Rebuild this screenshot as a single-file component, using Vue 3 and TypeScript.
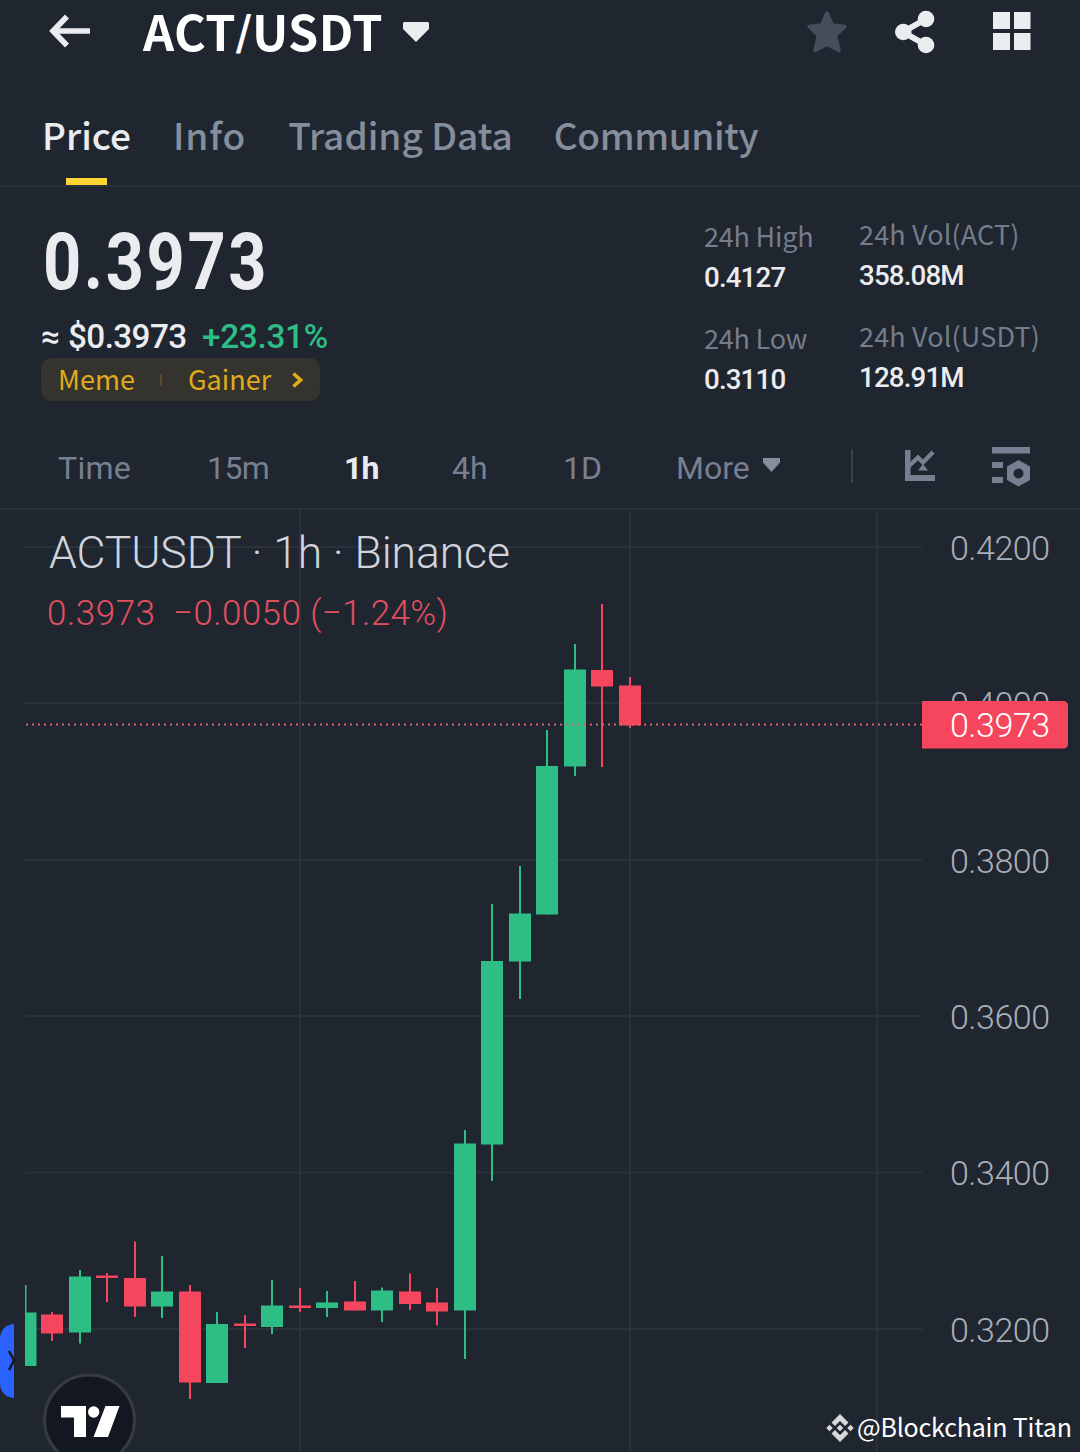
<script setup lang="ts">
interface Candle {
  x: number
  high: number
  top: number
  bottom: number
  low: number
  up: boolean
}

interface Stat {
  label: string
  value: string
}

const tabs: string[] = ['Price', 'Info', 'Trading Data', 'Community']

const statColumns: Stat[][] = [
  [
    { label: '24h High', value: '0.4127' },
    { label: '24h Low', value: '0.3110' },
  ],
  [
    { label: '24h Vol(ACT)', value: '358.08M' },
    { label: '24h Vol(USDT)', value: '128.91M' },
  ],
]

const intervals: string[] = ['Time', '15m', '1h', '4h', '1D', 'More']

const gridX: number[] = [300, 630, 877]
const ticks = [
  { y: 547, label: '0.4200' },
  { y: 703, label: '0.4000' },
  { y: 860, label: '0.3800' },
  { y: 1016, label: '0.3600' },
  { y: 1172.5, label: '0.3400' },
  { y: 1329, label: '0.3200' },
]

// x, wick top, body top, body bottom, wick bottom, rising
const rows: [number, number, number, number, number, boolean][] = [
  [25.5, 1285, 1312.5, 1366, 1366, true],
  [52, 1312, 1314.5, 1333.5, 1341, false],
  [80, 1270, 1276.5, 1332.5, 1343.5, true],
  [107, 1273, 1275.5, 1278, 1302, false],
  [135, 1241.5, 1278, 1306.5, 1317, false],
  [162, 1256, 1291.5, 1306.5, 1318, true],
  [190, 1285, 1291.5, 1382.5, 1399, false],
  [217, 1312, 1324, 1383, 1383, true],
  [245, 1315, 1323.5, 1326, 1348, false],
  [272, 1280, 1305.5, 1327, 1334, true],
  [300, 1288, 1305.5, 1308, 1312, false],
  [327, 1291, 1302.5, 1308, 1317, true],
  [355, 1281, 1301.5, 1310.5, 1310.5, false],
  [382, 1287.5, 1290.5, 1310.5, 1322, true],
  [410, 1273.5, 1291.5, 1304, 1310, false],
  [437, 1288, 1302.5, 1311.5, 1325.5, false],
  [465, 1130, 1143.5, 1310.5, 1359, true],
  [492, 904, 961, 1144.5, 1181, true],
  [520, 866, 913.5, 961.5, 999, true],
  [547, 730, 766, 914.5, 914.5, true],
  [575, 644, 669.5, 766.5, 776, true],
  [602, 604, 670, 686.5, 767, false],
  [630, 677, 685.5, 725.5, 728, false],
]
const candles: Candle[] = rows.map(([x, high, top, bottom, low, up]) => ({ x, high, top, bottom, low, up }))
</script>

<template>
  <main class="screen">
    <header class="topbar">
      <svg class="back" width="42" height="34" viewBox="0 0 42 34" fill="none" stroke="#eaecef" stroke-width="5.6">
        <path d="M41 17H5M18 2.500 4 17l14 14.500" />
      </svg>
      <h1>ACT<span class="slash">/</span>USDT</h1>
      <svg class="caret" width="26" height="20" viewBox="0 0 26 20"><path d="M1 0H25L26 1V7L13 20 0 7V1Z" fill="#eaecef" /></svg>
      <div class="actions">
        <svg width="42" height="44" viewBox="0 0 42 44">
          <path d="M21 3 26.200 15 39 16.500 29.500 25.500 33 40.500 21 34.500 9 40.500 12.500 25.500 3 16.500 15.800 15Z" fill="#474d5b" stroke="#474d5b" stroke-width="3.500" stroke-linejoin="round" />
        </svg>
        <svg width="40" height="44" viewBox="0 0 40 44" fill="#eaecef">
          <path d="M31 9 8 22 31 35" fill="none" stroke="#eaecef" stroke-width="6" />
          <circle cx="31" cy="9" r="8.300" /><circle cx="8.300" cy="22" r="8.300" /><circle cx="31" cy="35" r="8.300" />
        </svg>
        <svg width="38" height="38" viewBox="0 0 38 38" fill="#eaecef">
          <path d="M0 0H17V17H0ZM21 0H37.500V17H21ZM0 21H17V38H0ZM21 21H37.500V38H21Z" />
        </svg>
      </div>
    </header>

    <nav class="tabs">
      <a v-for="(tab, i) in tabs" :key="tab" :class="['tab', 'tab-' + i, { active: i === 0 }]">{{ tab }}</a>
    </nav>

    <section class="summary">
      <div class="quote">
        <div class="price">0.3973</div>
        <div class="fiat"><span class="approx">≈</span><span class="usd">$0.3973</span><span class="change">+23.31%</span></div>
        <div class="tags">
          <span class="meme">Meme</span><i></i><span class="gainer">Gainer</span>
          <svg width="11" height="16" viewBox="0 0 11 16" fill="none" stroke="#e0ab1c" stroke-width="3.600"><path d="M1.500 1.500 8.500 8l-7 6.500" /></svg>
        </div>
      </div>
      <div v-for="(column, i) in statColumns" :key="i" :class="['stats', 'stats-' + i]">
        <div v-for="s in column" :key="s.label" class="stat">
          <div class="label">{{ s.label }}</div>
          <div class="value">{{ s.value }}</div>
        </div>
      </div>
    </section>

    <div class="toolbar">
      <span v-for="(t, i) in intervals" :key="t" :class="['interval', 'interval-' + i, { selected: t === '1h' }]">{{ t }}</span>
      <svg class="more" width="17" height="14" viewBox="0 0 17 14"><path d="M0 0H17V4.500L8.500 14 0 4.500Z" fill="#848e9c" /></svg>
      <i class="divider"></i>
      <svg class="indicator" width="32" height="32" viewBox="0 0 32 32" fill="#787f90">
        <path d="M0 1H5.500V26H30V32H0Z" />
        <path d="M4 17 13 8.500 18 13.500 28 3" fill="none" stroke="#787f90" stroke-width="4.200" />
        <path d="M18 15 23 21.500H13Z" />
      </svg>
      <svg class="settings" width="38" height="40" viewBox="0 0 38 40" fill="#787f90">
        <path d="M0 0H38V6.500H0ZM0 15H11V21H0ZM0 30H11V36H0Z" />
        <path fill-rule="evenodd" d="M26.500 13 38 19.500V33L26.500 39.500 15 33V19.500ZM26.500 21.500a5 5 0 1 0 0 10 5 5 0 0 0 0-10Z" />
      </svg>
    </div>

    <svg class="chart" width="1080" height="944" viewBox="0 508 1080 944">
      <g stroke="#2a313b" stroke-width="2">
        <path d="M0 509H1080" />
        <path v-for="x in gridX" :key="x" :d="`M${x} 508V1452`" />
        <path v-for="t in ticks" :key="t.y" :d="`M25 ${t.y}H922`" />
      </g>
      <g class="axis">
        <text v-for="t in ticks" :key="t.y" x="950" :y="t.y + 12.500" textLength="100">{{ t.label }}</text>
      </g>
      <clipPath id="plot"><rect x="25" y="508" width="897" height="944" /></clipPath>
      <g clip-path="url(#plot)">
        <g v-for="c in candles" :key="c.x" :class="c.up ? 'up' : 'down'">
          <rect :x="c.x - 1" :y="c.high" width="2" :height="c.low - c.high" />
          <rect :x="c.x - 11" :y="c.top" width="22" :height="c.bottom - c.top" />
        </g>
      </g>
      <path d="M26 724.500H922" stroke="#d9606f" stroke-width="2" stroke-dasharray="2 4" />
      <path d="M922 701H1063q5 0 5 5V743.500q0 5-5 5H922Z" fill="#f6465d" />
      <text class="tag" x="950" y="737" textLength="100">0.3973</text>
      <text class="pair" x="49" y="567.500" textLength="461">ACTUSDT · 1h · Binance</text>
      <text class="delta" x="47" y="624.500" textLength="108">0.3973</text>
      <text class="delta" x="173" y="624.500" textLength="275">−0.0050 (−1.24%)</text>

      <path d="M14 1324H13Q0 1326 0 1340V1382Q0 1396 13 1398H14Z" fill="#2962ff" />
      <path d="M9 1351 14 1360.500 9 1370" fill="none" stroke="#131722" stroke-width="2.500" />
      <circle cx="89.500" cy="1420" r="45" fill="#131722" stroke="#363a45" stroke-width="3" />
      <g fill="#fff">
        <path d="M61 1406H86V1437H74V1417.500H61ZM105.500 1406H119.500L108 1437H93.500Z" />
        <circle cx="93.700" cy="1412" r="5.700" />
      </g>
      <g class="mark" fill="#d9d9d9">
        <path d="M840 1414 848.500 1422.500 845 1426 840 1421 835 1426 831.500 1422.500ZM840 1442 848.500 1433.500 845 1430 840 1435 835 1430 831.500 1433.500ZM829.500 1424.700 832.800 1428 829.500 1431.300 826.200 1428ZM850.500 1424.700 853.800 1428 850.500 1431.300 847.200 1428ZM840 1424.700 843.300 1428 840 1431.300 836.700 1428Z" />
      </g>
      <text class="watermark" x="857" y="1437" textLength="215">@Blockchain Titan</text>
    </svg>
  </main>
</template>

<style>
body { margin: 0; background: #1f2630; }
</style>

<style scoped>
.screen {
  width: 1080px;
  height: 1452px;
  overflow: hidden;
  background: #1f2630;
  color: #eaecef;
  font-family: "Noto Sans CJK SC", "Noto Sans", sans-serif;
}
svg { display: block; flex: none; }
.topbar { display: flex; height: 88px; align-items: flex-start; }
.back { margin: 14px 0 0 49px; }
h1 { width: 241px; margin: 0 0 0 52px; font-size: 48.5px; line-height: 61px; font-weight: 700; letter-spacing: .4px; color: #fff; white-space: nowrap; }
.slash { display: inline-block; font-size: 40px; line-height: 40px; transform: translateY(-5px) scaleX(1.1); }
.caret { margin: 22px 0 0 19px; }
.actions { display: flex; margin: 10px 0 0 377px; }
.actions svg:nth-child(2) { margin-left: 47px; }
.actions svg:nth-child(3) { margin: 2px 0 0 58px; }

.tabs { display: flex; box-sizing: border-box; height: 99px; border-bottom: 2px solid #29303a; }
.tab { display: flex; flex-direction: column; align-items: center; line-height: 93px; font-size: 37px; font-weight: 500; color: #848e9c; white-space: nowrap; }
.tab-0 { width: 87px; margin-left: 43px; }
.tab-1 { width: 73px; margin-left: 43px; letter-spacing: .8px; }
.tab-2 { width: 225px; margin-left: 42px; }
.tab-3 { width: 204px; margin-left: 41px; letter-spacing: -.4px; }
.tab.active { color: #eaecef; }
.tab.active::after { content: ""; width: 41px; height: 8px; margin-top: -3px; background: #fcd535; }

.summary { display: flex; height: 243px; }
.quote { width: 663px; padding-left: 41px; }
.price { margin: 27px 0 0 2px; font: 700 79px/96px Roboto, sans-serif; letter-spacing: 3px; transform: scaleX(.845); transform-origin: left; white-space: nowrap; }
.fiat { display: flex; height: 44px; margin-top: 5px; margin-bottom: -1px; font: 500 33.3px/44px Roboto, sans-serif; white-space: nowrap; }
.approx { width: 27px; }
.usd { width: 134px; letter-spacing: -.6px; }
.change { color: #2ebd85; letter-spacing: -.3px; }
.tags { display: flex; box-sizing: border-box; align-items: center; width: 279px; height: 43px; padding-left: 17px; border-radius: 10px; background: #34332d; color: #e0ab1c; font-size: 27px; line-height: 41px; }
.tags span { height: 43px; }
.meme { width: 77px; }
.tags i { width: 2px; height: 12px; margin: 0 26px 0 25px; background: #5b4b29; }
.gainer { width: 82px; }
.tags svg { margin-left: 22px; }
.stats { padding-top: 29px; white-space: nowrap; }
.stats-0 { width: 155px; }
.stats-0 .label { letter-spacing: -.2px; }
.stats-1 { padding-top: 27px; }
.stats-1 .label { letter-spacing: .15px; }
.stat { height: 102px; }
.label { font-size: 27px; line-height: 40px; color: #757c8a; }
.value { margin-top: 2px; font: 500 27.7px/40px Roboto, sans-serif; letter-spacing: -.85px; }

.toolbar { display: flex; height: 78px; color: #787f90; font: 400 32px/76px Roboto, sans-serif; white-space: nowrap; }
.interval-0 { width: 149px; margin-left: 58px; letter-spacing: .3px; }
.interval-1 { width: 137px; letter-spacing: -.6px; }
.interval-2 { width: 108px; letter-spacing: -.8px; }
.interval-3 { width: 111px; }
.interval-4 { width: 113px; }
.interval-5 { width: 87px; }
.selected { font-weight: 700; color: #eaecef; }
.more { margin-top: 28px; }
.divider { width: 2px; height: 34px; margin: 19px 0 0 71px; background: #3a404b; }
.indicator { margin: 19px 0 0 52px; }
.settings { margin: 17px 0 0 55px; }

text { font-family: Roboto, sans-serif; font-weight: 300; }
.axis text { font-size: 34px; fill: #a9aeb8; }
.up { fill: #2ebd85; }
.down { fill: #f6465d; }
.tag { font-size: 34px; fill: #fff; }
.pair { font-size: 44.5px; fill: #d1d4dc; }
.delta { font-size: 35px; fill: #e2505f; }
.watermark { font-family: "Noto Sans CJK SC", sans-serif; font-size: 25px; font-weight: 400; fill: #fff; }
</style>
